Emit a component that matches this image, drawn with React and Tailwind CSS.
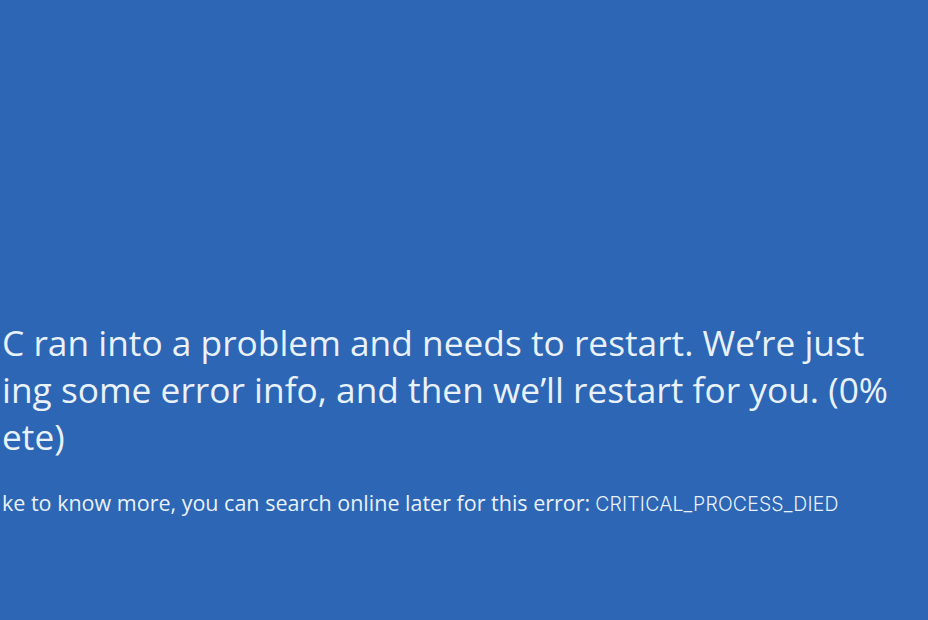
export default function App() {
  const lines = [
    ['Your P', 'C ran into a problem and needs to restart. We\u2019re just'],
    ['collect', 'ing some error info, and then we\u2019ll restart for you. (0%'],
    ['compl', 'ete)'],
  ];

  return (
    <div className="w-[928px] h-[620px] overflow-hidden bg-[#2c66b4] text-[#e9f1fb] font-['Open_Sans','Noto_Sans',sans-serif]">
      <div className="flex flex-col pt-[319px] pl-[2px]">
        {lines.map(([hidden, shown]) => (
          <div key={shown} className="flex whitespace-nowrap text-[35.3px] leading-[47px]">
            <span className="flex w-0 justify-end overflow-hidden">{hidden}</span>
            <span>{shown}</span>
          </div>
        ))}

        {/* stop code line */}
        <div className="flex items-baseline whitespace-nowrap mt-[29px] text-[21.5px] leading-[28px]">
          <span className="flex w-0 justify-end overflow-hidden">If you&rsquo;d li</span>
          <span>ke to know more, you can search online later for this error:</span>
          <span className="ml-[5px] font-['Inter','Roboto',sans-serif] font-light text-[19.4px] tracking-[0.2px]">CRITICAL_PROCESS_DIED</span>
        </div>
      </div>
    </div>
  );
}
